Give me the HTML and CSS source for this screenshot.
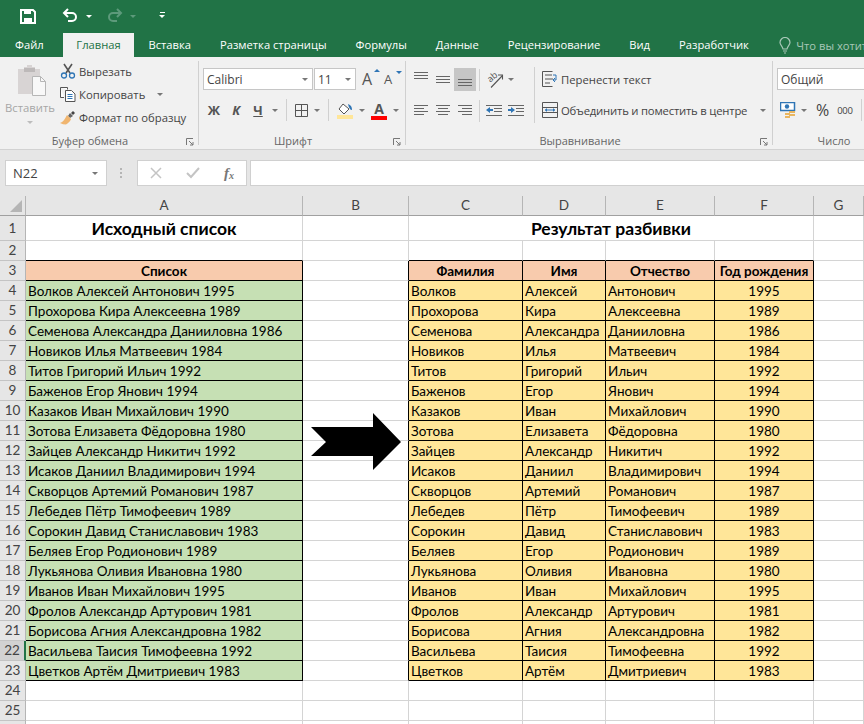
FILE: index.html
```html
<!DOCTYPE html>
<html lang="ru">
<head>
<meta charset="utf-8">
<title>Excel</title>
<link rel="stylesheet" href="styles.css">
</head>
<body>
<header class="titlebar">
  <svg class="qa-save" width="16" height="15" viewBox="0 0 16 15"><path d="M1 1h12l2 2v11H1z" fill="none" stroke="#fff" stroke-width="2"/><path d="M4 1h7v4H4zM4 9h8v5H4z" fill="#fff"/></svg>
  <svg class="qa-undo" width="16" height="14" viewBox="0 0 16 14"><path d="M6 1L2 5l4 4M2 5h8a4 4 0 0 1 0 8H6" fill="none" stroke="#fff" stroke-width="2"/></svg>
  <span class="caret-w qa-c1"></span>
  <svg class="qa-redo" width="16" height="14" viewBox="0 0 16 14"><path d="M10 1l4 4-4 4M14 5H6a4 4 0 0 0 0 8h4" fill="none" stroke="#5d9a7b" stroke-width="2"/></svg>
  <span class="caret-w caret-dim qa-c2"></span>
  <span class="qa-custom"><i></i><span class="caret-w"></span></span>
</header>
<nav class="tabs">
  <span class="tab tab-file">Файл</span>
  <span class="tab tab-active">Главная</span>
  <span class="tab">Вставка</span>
  <span class="tab">Разметка страницы</span>
  <span class="tab">Формулы</span>
  <span class="tab">Данные</span>
  <span class="tab">Рецензирование</span>
  <span class="tab">Вид</span>
  <span class="tab">Разработчик</span>
  <span class="tell">
    <svg width="12" height="17" viewBox="0 0 12 17"><path d="M4 12C3.500 9 1 8 1 5.500a5 5 0 0 1 10 0C11 8 8.500 9 8 12zM4 14h4M5 16h2" fill="none" stroke="#a9c8b8" stroke-width="1.200"/></svg>
    Что вы хотите сделать?
  </span>
</nav>
<section class="ribbon">
  <div class="group g-clip">
    <div class="g-body clip-body">
      <div class="paste">
        <svg class="paste-icon" width="30" height="32" viewBox="0 0 30 32"><path d="M1 5h6V3h3V1h5v2h3v2h5v25H1z" fill="#d8d4d4"/><path d="M7 4h11v4H7z" fill="#bdb9b9"/><path d="M15.500 12.500h8l5 5v14h-13z" fill="#f8f8f8" stroke="#b6b6b6"/><path d="M23.500 12.500v5h5" fill="none" stroke="#b6b6b6"/></svg>
        <span class="paste-label">Вставить</span>
        <span class="caret caret-dim"></span>
      </div>
      <div class="clip-list">
        <div class="clip-item"><svg width="16" height="16" viewBox="0 0 16 16"><path d="M4 1l6 9M12 1l-6 9" stroke="#555" stroke-width="1.600" fill="none"/><circle cx="4" cy="12.500" r="2.500" fill="none" stroke="#2f75b5" stroke-width="1.300"/><circle cx="12" cy="12.500" r="2.500" fill="none" stroke="#2f75b5" stroke-width="1.300"/></svg>Вырезать</div>
        <div class="clip-item"><svg width="16" height="15" viewBox="0 0 16 15"><path d="M.5.500h7v2M.5.500v10h3.500" fill="#fff" stroke="#555"/><path d="M5.500 3.500h6l3.500 3.500v7.500H5.500z" fill="#fff" stroke="#555"/><path d="M7.500 7.500h5M7.500 9.500h5M7.500 11.500h5" stroke="#2f75b5"/></svg>Копировать<span class="caret copy-caret"></span></div>
        <div class="clip-item"><svg width="16" height="15" viewBox="0 0 16 15"><path d="M10 3l3 3-3 2-2-2z" fill="#666"/><path d="M13 1l2 2-2 2-2-2z" fill="#444"/><path d="M7 5l4 4c-1 3-3 4-5 5.500-2 0-4-.500-6-1.500 3-1 5-4 7-8z" fill="#f0b56f"/></svg>Формат по образцу</div>
      </div>
    </div>
    <div class="g-label">Буфер обмена</div>
    <svg class="launcher" width="8" height="8" viewBox="0 0 8 8"><path d="M.5 7V.5H7M3 3l4 4M4 7h3V4" fill="none" stroke="#777"/></svg>
  </div>
  <div class="group g-font">
    <div class="g-body font-body">
      <div class="font-row1">
        <div class="combo combo-font">Calibri<span class="caret"></span></div>
        <div class="combo combo-size">11<span class="caret"></span></div>
        <span class="grow grow-up">A<i></i></span>
        <span class="grow grow-down">A<i></i></span>
      </div>
      <div class="font-row2">
        <b class="fmt">Ж</b>
        <b class="fmt fmt-i">К</b>
        <b class="fmt fmt-u">Ч</b>
        <span class="caret"></span>
        <i class="vsep"></i>
        <svg width="13" height="13" viewBox="0 0 13 13"><path d="M.5.500h12v12H.5zM6.500.500v12M.5 6.500h12" fill="none" stroke="#555"/></svg>
        <span class="caret"></span>
        <i class="vsep"></i>
        <span class="fill-btn"><svg width="16" height="12" viewBox="0 0 16 12"><path d="M6 1l6 5-5 5-5-5z" fill="#fff" stroke="#555"/><path d="M11 1c3 1 4 3 4 6-2 0-3-2-4-6z" fill="#2f75b5"/></svg><i></i></span>
        <span class="caret"></span>
        <span class="color-btn">A<i></i></span>
        <span class="caret"></span>
      </div>
    </div>
    <div class="g-label">Шрифт</div>
    <svg class="launcher" width="8" height="8" viewBox="0 0 8 8"><path d="M.5 7V.5H7M3 3l4 4M4 7h3V4" fill="none" stroke="#777"/></svg>
  </div>
  <div class="group g-align">
    <div class="g-body align-body">
      <div class="align-icons">
        <div class="align-row">
          <span class="al al-top"><svg width="14" height="8" viewBox="0 0 14 8"><path d="M0 .5h14M0 3.500h14M0 6.500h14" stroke="#666"/></svg></span>
          <span class="al"><svg width="14" height="8" viewBox="0 0 14 8"><path d="M0 .5h14M0 3.500h14M0 6.500h14" stroke="#666"/></svg></span>
          <span class="al al-bot al-on"><svg width="14" height="8" viewBox="0 0 14 8"><path d="M0 .5h14M0 3.500h14M0 6.500h14" stroke="#666"/></svg></span>
          <i class="vsep"></i>
          <span class="orient"><span class="orient-ab">ab</span><svg width="17" height="16" viewBox="0 0 17 16"><path d="M4 15.500L15 4M11 3h4.500v4.500" fill="none" stroke="#555" stroke-width="1.100"/></svg></span>
          <span class="caret"></span>
        </div>
        <div class="align-row">
          <span class="al"><svg width="14" height="11" viewBox="0 0 14 11"><path d="M0 .5h14M0 3.500h10M0 6.500h14M0 9.500h10" stroke="#666"/></svg></span>
          <span class="al"><svg width="14" height="11" viewBox="0 0 14 11"><path d="M0 .5h14M2 3.500h10M0 6.500h14M2 9.500h10" stroke="#666"/></svg></span>
          <span class="al"><svg width="14" height="11" viewBox="0 0 14 11"><path d="M0 .5h14M4 3.500h10M0 6.500h14M4 9.500h10" stroke="#666"/></svg></span>
          <i class="vsep"></i>
          <svg class="indent" width="16" height="12" viewBox="0 0 16 12"><path d="M0 .5h16M8 3.500h8M8 6.500h8M0 10.500h16" stroke="#666"/><path d="M0 5l4-3v2h3v2H4v2z" fill="#2f75b5"/></svg>
          <svg class="indent" width="16" height="12" viewBox="0 0 16 12"><path d="M0 .5h16M8 3.500h8M8 6.500h8M0 10.500h16" stroke="#666"/><path d="M7 5L3 2v2H0v2h3v2z" fill="#2f75b5"/></svg>
        </div>
      </div>
      <i class="vsep vsep-tall"></i>
      <div class="align-cmds">
        <div class="cmd"><svg width="16" height="16" viewBox="0 0 16 16"><path d="M.5 .5h10M.5 .5v15h10M3 4h7M3 8h8M3 12h5" fill="none" stroke="#555"/><path d="M11 4h3v5h-3m2-2l-2 2 2 2" fill="none" stroke="#2f75b5"/></svg>Перенести текст</div>
        <div class="cmd"><svg width="16" height="16" viewBox="0 0 16 16"><path d="M.5.500h15v15H.5zM.5 5.500h15M.5 10.500h15" fill="none" stroke="#555"/><path d="M3 8h10" stroke="#2f75b5"/><path d="M3 8l2-2v4zM13 8l-2-2v4z" fill="#2f75b5"/></svg><span class="merge-text">Объединить и поместить в центре</span><span class="caret merge-caret"></span></div>
      </div>
    </div>
    <div class="g-label">Выравнивание</div>
    <svg class="launcher" width="8" height="8" viewBox="0 0 8 8"><path d="M.5 7V.5H7M3 3l4 4M4 7h3V4" fill="none" stroke="#777"/></svg>
  </div>
  <div class="group g-num">
    <div class="g-body num-body">
      <div class="combo combo-num">Общий</div>
      <div class="num-row">
        <svg width="16" height="16" viewBox="0 0 16 16"><path d="M.5.500h14v8H.5z" fill="#fff" stroke="#2f75b5" stroke-width="1.500"/><circle cx="7" cy="4.500" r="2.200" fill="#2f75b5"/><path d="M9 9h6v2H9zM9 12h6v2H9zM5 11h5v2H5zM5 14h5v2H5z" fill="#e9b660"/></svg>
        <span class="caret"></span>
        <span class="pct">%</span>
        <span class="thou">000</span>
        <i class="vsep"></i>
      </div>
    </div>
    <div class="g-label">Число</div>
  </div>
</section>
<section class="formula">
  <div class="namebox">N22<span class="caret"></span></div>
  <span class="grip"></span>
  <div class="fbtns">
    <svg width="12" height="12" viewBox="0 0 12 12"><path d="M1 1l10 10M11 1L1 11" stroke="#c4c4c4" stroke-width="1.500"/></svg>
    <svg width="14" height="12" viewBox="0 0 14 12"><path d="M1 6l4 4 8-9" fill="none" stroke="#c4c4c4" stroke-width="2"/></svg>
    <span class="fx">f<sub>x</sub></span>
  </div>
  <div class="finput"></div>
</section>
<main class="sheet">
  <table class="grid">
    <colgroup><col class="c-h"><col class="c-a"><col class="c-b"><col class="c-c"><col class="c-d"><col class="c-e"><col class="c-f"><col class="c-g"></colgroup>
    <thead>
      <tr><th class="corner"><i></i></th><th>A</th><th>B</th><th>C</th><th>D</th><th>E</th><th>F</th><th>G</th></tr>
    </thead>
    <tbody>
      <tr class="r-title"><th>1</th><td class="title">Исходный список</td><td></td><td class="title" colspan="4">Результат разбивки</td><td></td></tr>
      <tr><th>2</th><td class="bb"></td><td></td><td class="bb"></td><td class="bb"></td><td class="bb"></td><td class="bb"></td><td></td></tr>
      <tr><th>3</th><td class="box hd">Список</td><td class="bl"></td><td class="box hd">Фамилия</td><td class="box hd">Имя</td><td class="box hd">Отчество</td><td class="box hd">Год рождения</td><td></td></tr>
      <tr><th>4</th><td class="box src">Волков Алексей Антонович 1995</td><td class="bl"></td><td class="box res">Волков</td><td class="box res">Алексей</td><td class="box res">Антонович</td><td class="box res num">1995</td><td></td></tr>
      <tr><th>5</th><td class="box src">Прохорова Кира Алексеевна 1989</td><td class="bl"></td><td class="box res">Прохорова</td><td class="box res">Кира</td><td class="box res">Алексеевна</td><td class="box res num">1989</td><td></td></tr>
      <tr><th>6</th><td class="box src">Семенова Александра Данииловна 1986</td><td class="bl"></td><td class="box res">Семенова</td><td class="box res">Александра</td><td class="box res">Данииловна</td><td class="box res num">1986</td><td></td></tr>
      <tr><th>7</th><td class="box src">Новиков Илья Матвеевич 1984</td><td class="bl"></td><td class="box res">Новиков</td><td class="box res">Илья</td><td class="box res">Матвеевич</td><td class="box res num">1984</td><td></td></tr>
      <tr><th>8</th><td class="box src">Титов Григорий Ильич 1992</td><td class="bl"></td><td class="box res">Титов</td><td class="box res">Григорий</td><td class="box res">Ильич</td><td class="box res num">1992</td><td></td></tr>
      <tr><th>9</th><td class="box src">Баженов Егор Янович 1994</td><td class="bl"></td><td class="box res">Баженов</td><td class="box res">Егор</td><td class="box res">Янович</td><td class="box res num">1994</td><td></td></tr>
      <tr><th>10</th><td class="box src">Казаков Иван Михайлович 1990</td><td class="bl"></td><td class="box res">Казаков</td><td class="box res">Иван</td><td class="box res">Михайлович</td><td class="box res num">1990</td><td></td></tr>
      <tr><th>11</th><td class="box src">Зотова Елизавета Фёдоровна 1980</td><td class="bl"></td><td class="box res">Зотова</td><td class="box res">Елизавета</td><td class="box res">Фёдоровна</td><td class="box res num">1980</td><td></td></tr>
      <tr><th>12</th><td class="box src">Зайцев Александр Никитич 1992</td><td class="bl"></td><td class="box res">Зайцев</td><td class="box res">Александр</td><td class="box res">Никитич</td><td class="box res num">1992</td><td></td></tr>
      <tr><th>13</th><td class="box src">Исаков Даниил Владимирович 1994</td><td class="bl"></td><td class="box res">Исаков</td><td class="box res">Даниил</td><td class="box res">Владимирович</td><td class="box res num">1994</td><td></td></tr>
      <tr><th>14</th><td class="box src">Скворцов Артемий Романович 1987</td><td class="bl"></td><td class="box res">Скворцов</td><td class="box res">Артемий</td><td class="box res">Романович</td><td class="box res num">1987</td><td></td></tr>
      <tr><th>15</th><td class="box src">Лебедев Пётр Тимофеевич 1989</td><td class="bl"></td><td class="box res">Лебедев</td><td class="box res">Пётр</td><td class="box res">Тимофеевич</td><td class="box res num">1989</td><td></td></tr>
      <tr><th>16</th><td class="box src">Сорокин Давид Станиславович 1983</td><td class="bl"></td><td class="box res">Сорокин</td><td class="box res">Давид</td><td class="box res">Станиславович</td><td class="box res num">1983</td><td></td></tr>
      <tr><th>17</th><td class="box src">Беляев Егор Родионович 1989</td><td class="bl"></td><td class="box res">Беляев</td><td class="box res">Егор</td><td class="box res">Родионович</td><td class="box res num">1989</td><td></td></tr>
      <tr><th>18</th><td class="box src">Лукьянова Оливия Ивановна 1980</td><td class="bl"></td><td class="box res">Лукьянова</td><td class="box res">Оливия</td><td class="box res">Ивановна</td><td class="box res num">1980</td><td></td></tr>
      <tr><th>19</th><td class="box src">Иванов Иван Михайлович 1995</td><td class="bl"></td><td class="box res">Иванов</td><td class="box res">Иван</td><td class="box res">Михайлович</td><td class="box res num">1995</td><td></td></tr>
      <tr><th>20</th><td class="box src">Фролов Александр Артурович 1981</td><td class="bl"></td><td class="box res">Фролов</td><td class="box res">Александр</td><td class="box res">Артурович</td><td class="box res num">1981</td><td></td></tr>
      <tr><th>21</th><td class="box src">Борисова Агния Александровна 1982</td><td class="bl"></td><td class="box res">Борисова</td><td class="box res">Агния</td><td class="box res">Александровна</td><td class="box res num">1982</td><td></td></tr>
      <tr><th class="row-sel">22</th><td class="box src">Васильева Таисия Тимофеевна 1992</td><td class="bl"></td><td class="box res">Васильева</td><td class="box res">Таисия</td><td class="box res">Тимофеевна</td><td class="box res num">1992</td><td></td></tr>
      <tr><th>23</th><td class="box src">Цветков Артём Дмитриевич 1983</td><td class="bl"></td><td class="box res">Цветков</td><td class="box res">Артём</td><td class="box res">Дмитриевич</td><td class="box res num">1983</td><td></td></tr>
      <tr><th>24</th><td></td><td></td><td></td><td></td><td></td><td></td><td></td></tr>
      <tr><th>25</th><td></td><td></td><td></td><td></td><td></td><td></td><td></td></tr>
      <tr><th></th><td></td><td></td><td></td><td></td><td></td><td></td><td></td></tr>
    </tbody>
  </table>
  <svg class="arrow" width="90" height="58" viewBox="0 0 90 58"><path d="M0 14H62V0L90 29 62 57V43H0L15 29z" fill="#000"/></svg>
</main>
</body>
</html>
```
FILE: styles.css
```css
html, body { margin: 0; padding: 0; }
body {
  width: 864px; height: 724px; overflow: hidden; background: #e6e6e6;
  font-family: "Open Sans", "Noto Sans", sans-serif; font-size: 11.3px; color: #444;
}
i { display: block; font-style: normal; }
svg { display: block; flex: none; }

/* title bar */
.titlebar { height: 33px; background: #217346; display: flex; align-items: center; }
.qa-save { margin-left: 20px; margin-top: -1px; }
.qa-undo { margin-left: 26px; margin-top: -4px; }
.qa-c1 { margin-left: 8px; }
.qa-redo { margin-left: 15px; margin-top: -4px; }
.qa-c2 { margin-left: 7px; }
.qa-custom { margin-left: 23px; display: flex; flex-direction: column; align-items: center; gap: 2px; margin-top: -3px; }
.qa-custom i { width: 5px; height: 1px; background: #fff; }
.caret-w { display: block; width: 0; height: 0; border-left: 3px solid transparent; border-right: 3px solid transparent; border-top: 3px solid #fff; }
.caret-w.caret-dim { border-top-color: #5d9a7b; }

/* tabs */
.tabs { height: 24px; background: #217346; display: flex; color: #fff; white-space: nowrap; overflow: hidden; font-size: 11.2px; }
.tab { padding: 0 14.5px; line-height: 24px; flex: none; }
.tab-file { box-sizing: border-box; width: 63px; padding: 0 0 0 15px; }
.tab-active { box-sizing: border-box; background: #f1f1f1; color: #217346; padding: 0; width: 71px; text-align: center; }
.tell { display: flex; align-items: center; gap: 5px; margin-left: 16px; color: #a9c8b8; flex: none; }

/* ribbon */
.ribbon { background: #f1f1f1; border-bottom: 1px solid #d2d2d2; display: flex; padding-top: 4px; height: 88px; overflow: hidden; }
.group { position: relative; display: flex; flex-direction: column; height: 84px; border-right: 1px solid #d0d0d0; flex: none; }
.g-body { flex: 1; display: flex; min-height: 0; }
.g-label { height: 18px; line-height: 28px; text-align: center; color: #666; font-size: 11px; padding-right: 18px; }
.launcher { position: absolute; right: 4px; bottom: -1px; }
.g-clip { width: 198px; }
.g-font { width: 206px; }
.g-align { width: 366px; }
.g-num { width: 140px; border-right: 0; }
.caret { display: block; width: 0; height: 0; border-left: 3px solid transparent; border-right: 3px solid transparent; border-top: 3px solid #777; flex: none; }
.caret-dim { border-top-color: #bdbdbd; }
.vsep { width: 1px; height: 22px; background: #d0d0d0; flex: none; }

/* clipboard */
.clip-body { padding-left: 6px; }
.paste { width: 48px; display: flex; flex-direction: column; align-items: center; color: #a6a6a6; padding-top: 3px; flex: none; }
.paste-icon { margin-left: 3px; }
.paste-label { margin-top: 3px; line-height: 18px; }
.paste .caret { margin-top: 4px; }
.clip-list { margin-left: 6px; padding-top: 1px; display: flex; flex-direction: column; gap: 5px; }
.clip-item { display: flex; align-items: center; gap: 3px; height: 18px; white-space: nowrap; }
.copy-caret { margin-left: 9px; }

/* font */
.font-body { flex-direction: column; padding-left: 4px; }
.font-row1 { display: flex; align-items: center; padding-top: 7px; }
.combo { box-sizing: border-box; height: 22px; background: #fff; border: 1px solid #c6c6c6; display: flex; align-items: center; justify-content: space-between; padding: 0 4px 0 3px; font-size: 12px; color: #444; flex: none; }
.combo-font { width: 110px; margin-right: 1px; }
.combo-size { width: 42px; }
.grow { position: relative; font-size: 16px; color: #555; margin-left: 6px; width: 14px; }
.grow-down { font-size: 13px; margin-left: 8px; }
.grow i { position: absolute; top: 1px; right: -4px; width: 0; height: 0; border-left: 3px solid transparent; border-right: 3px solid transparent; border-bottom: 3px solid #2f75b5; }
.grow-down i { border-bottom: 0; border-top: 3px solid #2f75b5; }
.font-row2 { display: flex; align-items: center; margin-top: 8px; height: 24px; padding-left: 3px; gap: 6px; }
.font-row2 .vsep { margin: 0 2px; }
.fmt { font-size: 13px; color: #555; width: 16px; text-align: center; }
.fmt-i { font-style: italic; }
.fmt-u { text-decoration: underline; }
.fill-btn { margin-top: 1px; }
.fill-btn i { height: 4px; width: 16px; background: #ffe699; }
.color-btn { font-size: 14px; font-weight: 700; color: #555; width: 16px; line-height: 14px; text-align: center; margin-top: 1px; }
.color-btn i { height: 4px; background: #f00; }

/* alignment */
.align-body { padding-left: 4px; }
.align-icons { width: 124px; display: flex; flex-direction: column; gap: 8px; padding-top: 7px; flex: none; }
.align-row { display: flex; align-items: center; height: 23px; }
.al { box-sizing: border-box; width: 22px; height: 23px; display: flex; align-items: center; justify-content: center; flex: none; }
.al-top { align-items: flex-start; padding-top: 4px; }
.al-bot { align-items: flex-end; padding-bottom: 4px; }
.al-on { background: #c6c6c6; }
.orient { position: relative; margin-left: 7px; flex: none; }
.orient-ab { position: absolute; left: 0; top: 0; font-size: 9px; line-height: 10px; color: #555; transform: rotate(-40deg); }
.align-row > .caret { margin-left: 4px; }
.align-row > .vsep { margin-left: 3px; }
.indent { margin-left: 6px; }
.vsep-tall { height: 56px; margin-top: 6px; }
.align-cmds { margin-left: 7px; padding-top: 9px; display: flex; flex-direction: column; gap: 13px; flex: none; }
.cmd { display: flex; align-items: center; gap: 3px; height: 18px; white-space: nowrap; }
.merge-text { letter-spacing: -.2px; }
.merge-caret { margin-left: 10px; }

/* number */
.num-body { flex-direction: column; padding-left: 4px; }
.combo-num { width: 110px; margin-top: 7px; padding: 0 3px; justify-content: flex-start; }
.num-row { display: flex; align-items: center; gap: 5px; margin-top: 8px; height: 24px; padding-left: 3px; }
.pct { font-size: 16px; margin-left: 4px; }
.thou { font-size: 9.500px; letter-spacing: -.3px; margin-left: 3px; }
.num-row .vsep { margin-left: 3px; }

/* formula bar */
.formula { height: 46px; display: flex; padding-top: 10px; box-sizing: border-box; }
.namebox { box-sizing: border-box; margin-left: 5px; width: 102px; height: 26px; background: #fff; border: 1px solid #d0d0d0; display: flex; align-items: center; justify-content: space-between; padding: 0 8px 0 7px; font-size: 13px; color: #444; }
.grip { width: 3px; height: 10px; margin: 8px 14px 0 13px; border-left: 2px dotted #b5b5b5; box-sizing: border-box; }
.fbtns { box-sizing: border-box; width: 110px; height: 26px; background: #fff; border: 1px solid #d0d0d0; display: flex; align-items: center; gap: 24px; padding-left: 12px; }
.fx { font-family: "Liberation Serif", serif; font-style: italic; font-weight: 700; font-size: 15px; line-height: 16px; color: #777; }
.fx sub { font-size: 10px; line-height: 0; vertical-align: -1px; }
.finput { flex: 1; height: 26px; margin-left: 3px; background: #fff; border: 1px solid #d0d0d0; box-sizing: border-box; border-right: 0; }

/* sheet */
.sheet { position: relative; background: #fff; }
.grid { table-layout: fixed; width: 864px; border-collapse: separate; border-spacing: 0; font-family: Lato, "Noto Sans", sans-serif; font-size: 13.500px; color: #000; }
.c-h { width: 26px; } .c-a { width: 277px; } .c-b { width: 106px; } .c-c { width: 114px; }
.c-d { width: 83px; } .c-e { width: 109px; } .c-f { width: 99px; } .c-g { width: 50px; }
.grid tr { height: 20px; }
.grid .r-title { height: 25px; }
.grid th, .grid td { box-sizing: border-box; padding: 0; overflow: hidden; white-space: nowrap; }
.grid td { border-right: 1px solid #d4d4d4; border-bottom: 1px solid #d4d4d4; padding-left: 2px; padding-top: 1px; line-height: 18px; }
.grid th { background: #e6e6e6; font-weight: 400; color: #444; font-size: 13.500px; border-right: 1px solid #b5b5b5; border-bottom: 1px solid #c4c4c4; line-height: 19px; }
.grid thead th { border-bottom: 1px solid #a0a0a0; height: 20px; }
.corner { position: relative; }
.corner i { position: absolute; right: 3px; bottom: 3px; width: 0; height: 0; border-left: 12px solid transparent; border-bottom: 12px solid #b5b5b5; }
.grid .row-sel { background: #d2d2d2; border-right: 2px solid #217346; }
.grid .title { font-size: 17.500px; font-weight: 700; text-align: center; padding-left: 0; padding-top: 2px; }
.grid .box { border-right-color: #000; border-bottom-color: #000; }
.grid .bl { border-right-color: #000; }
.grid .bb { border-bottom-color: #000; }
.grid .hd { background: #f8cbad; font-weight: 700; text-align: center; padding-left: 0; }
.grid .src { background: #c6e0b4; }
.grid .res { background: #ffe699; }
.grid .num { text-align: center; padding-left: 0; }

.arrow { position: absolute; left: 311px; top: 217px; }
```
